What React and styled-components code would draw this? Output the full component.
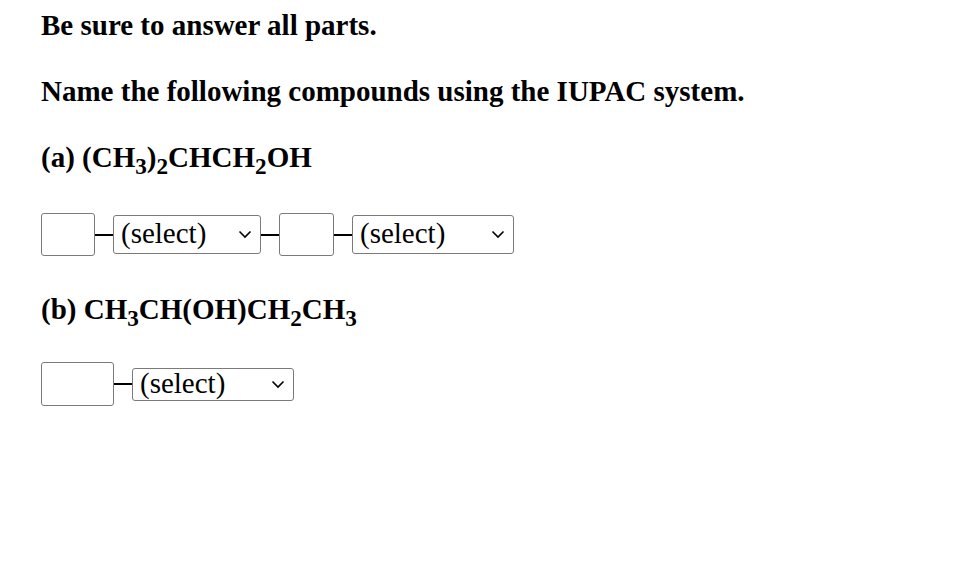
import styled, { createGlobalStyle } from 'styled-components'

const Global = createGlobalStyle`
body {
    margin: 0;
    background: #fff;
    font-family: "Liberation Serif", "Times New Roman", serif;
    color: #000;
}
`

const Page = styled.div`
padding: 9px 0 0 41px;
`

const Line = styled.p`
margin: 0 0 ${p => p.gap || 30}px 0;
font-size: 29px;
font-weight: bold;
line-height: 32px;
white-space: nowrap;
sub {
    font-size: 0.8em;
    line-height: 0;
    vertical-align: -0.3em;
}
`

const Row = styled.div`
display: flex;
align-items: center;
margin-bottom: ${p => p.mb || 0}px;
`

const Box = styled.div`
box-sizing: border-box;
width: ${p => p.w}px;
height: ${p => p.h}px;
border: 1px solid #7a7a7a;
border-radius: 3px;
background: #fff;
`

const Dash = styled.div`
width: 18px;
height: 2px;
background: #000;
`

const Select = styled.div`
box-sizing: border-box;
width: ${p => p.w}px;
height: ${p => p.h}px;
border: 1px solid #7a7a7a;
border-radius: 3px;
display: flex;
align-items: center;
justify-content: space-between;
padding: 0 8px 0 7px;
font-size: 29px;
line-height: 1;
span {
    margin-top: -2px;
}
`

const Chevron = () => (
    <svg width="14" height="9" viewBox="0 0 14 9">
        <path d="M1.5 1.5 L7 7 L12.5 1.5" fill="none" stroke="#000" strokeWidth="1.6" />
    </svg>
)

const App = () => {
    return (
        <Page>
            <Global />
            <Line gap={34}>Be sure to answer all parts.</Line>
            <Line gap={34}>Name the following compounds using the IUPAC system.</Line>
            <Line gap={40}>(a) (CH<sub>3</sub>)<sub>2</sub>CHCH<sub>2</sub>OH</Line>
            <Row mb={37}>
                <Box w={54} h={43} />
                <Dash />
                <Select w={148} h={39}><span>(select)</span><Chevron /></Select>
                <Dash />
                <Box w={55} h={43} />
                <Dash />
                <Select w={162} h={39}><span>(select)</span><Chevron /></Select>
            </Row>
            <Line gap={37}>(b) CH<sub>3</sub>CH(OH)CH<sub>2</sub>CH<sub>3</sub></Line>
            <Row>
                <Box w={73} h={44} />
                <Dash />
                <Select w={162} h={33}><span>(select)</span><Chevron /></Select>
            </Row>
        </Page>
    )
}

export default App
